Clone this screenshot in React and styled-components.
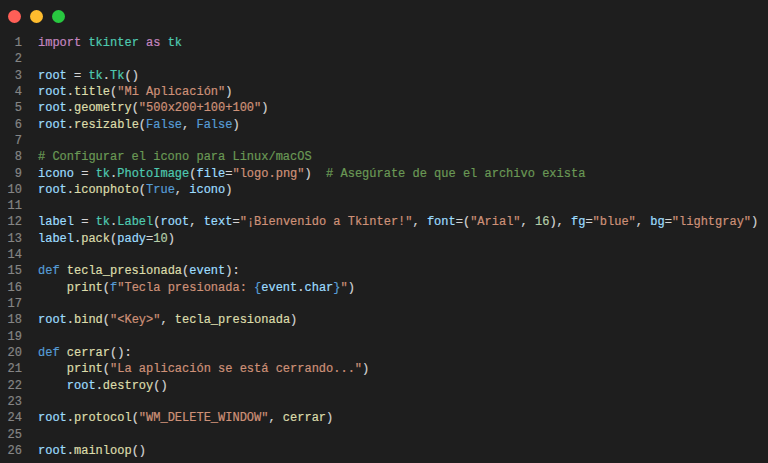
import React from 'react'
import styled, { createGlobalStyle } from 'styled-components'

const Global = createGlobalStyle`
  html, body {
    margin: 0;
    padding: 0;
    background: #1e1e1e;
  }
`

const c = {
  kw: '#c586c0',
  mod: '#4ec9b0',
  v: '#9cdcfe',
  fn: '#dcdcaa',
  s: '#ce9178',
  cm: '#6a9955',
  b: '#569cd6',
  n: '#b5cea8',
  p: '#d4d4d4',
}

// each line is a list of [colorKey, text]
const lines = [
  [['kw', 'import'], ['p', ' '], ['mod', 'tkinter'], ['p', ' '], ['kw', 'as'], ['p', ' '], ['mod', 'tk']],
  [],
  [['v', 'root'], ['p', ' = '], ['mod', 'tk'], ['p', '.'], ['mod', 'Tk'], ['p', '()']],
  [['v', 'root'], ['p', '.'], ['fn', 'title'], ['p', '('], ['s', '"Mi Aplicación"'], ['p', ')']],
  [['v', 'root'], ['p', '.'], ['fn', 'geometry'], ['p', '('], ['s', '"500x200+100+100"'], ['p', ')']],
  [['v', 'root'], ['p', '.'], ['fn', 'resizable'], ['p', '('], ['b', 'False'], ['p', ', '], ['b', 'False'], ['p', ')']],
  [],
  [['cm', '# Configurar el icono para Linux/macOS']],
  [['v', 'icono'], ['p', ' = '], ['mod', 'tk'], ['p', '.'], ['mod', 'PhotoImage'], ['p', '('], ['v', 'file'], ['p', '='], ['s', '"logo.png"'], ['p', ')  '], ['cm', '# Asegúrate de que el archivo exista']],
  [['v', 'root'], ['p', '.'], ['fn', 'iconphoto'], ['p', '('], ['b', 'True'], ['p', ', '], ['v', 'icono'], ['p', ')']],
  [],
  [['v', 'label'], ['p', ' = '], ['mod', 'tk'], ['p', '.'], ['mod', 'Label'], ['p', '('], ['v', 'root'], ['p', ', '], ['v', 'text'], ['p', '='], ['s', '"¡Bienvenido a Tkinter!"'], ['p', ', '], ['v', 'font'], ['p', '=('], ['s', '"Arial"'], ['p', ', '], ['n', '16'], ['p', '), '], ['v', 'fg'], ['p', '='], ['s', '"blue"'], ['p', ', '], ['v', 'bg'], ['p', '='], ['s', '"lightgray"'], ['p', ')']],
  [['v', 'label'], ['p', '.'], ['fn', 'pack'], ['p', '('], ['v', 'pady'], ['p', '='], ['n', '10'], ['p', ')']],
  [],
  [['b', 'def'], ['p', ' '], ['fn', 'tecla_presionada'], ['p', '('], ['v', 'event'], ['p', '):']],
  [['p', '    '], ['fn', 'print'], ['p', '('], ['b', 'f'], ['s', '"Tecla presionada: '], ['b', '{'], ['v', 'event'], ['p', '.'], ['v', 'char'], ['b', '}'], ['s', '"'], ['p', ')']],
  [],
  [['v', 'root'], ['p', '.'], ['fn', 'bind'], ['p', '('], ['s', '"<Key>"'], ['p', ', '], ['fn', 'tecla_presionada'], ['p', ')']],
  [],
  [['b', 'def'], ['p', ' '], ['fn', 'cerrar'], ['p', '():']],
  [['p', '    '], ['fn', 'print'], ['p', '('], ['s', '"La aplicación se está cerrando..."'], ['p', ')']],
  [['p', '    '], ['v', 'root'], ['p', '.'], ['fn', 'destroy'], ['p', '()']],
  [],
  [['v', 'root'], ['p', '.'], ['fn', 'protocol'], ['p', '('], ['s', '"WM_DELETE_WINDOW"'], ['p', ', '], ['fn', 'cerrar'], ['p', ')']],
  [],
  [['v', 'root'], ['p', '.'], ['fn', 'mainloop'], ['p', '()']],
]

export default function App() {
  return (
    <Window>
      <Global />
      <TitleBar>
        <Dot color="#ff5f57" />
        <Dot color="#febc2e" />
        <Dot color="#28c840" />
      </TitleBar>
      <Code>
        {lines.map((parts, i) => (
          <Row key={i}>
            <LineNo>{i + 1}</LineNo>
            <LineText>
              {parts.map(([k, t], j) => (
                <Tok key={j} $color={c[k]}>{t}</Tok>
              ))}
            </LineText>
          </Row>
        ))}
      </Code>
    </Window>
  )
}

const Window = styled.div`
  width: 768px;
  height: 463px;
  background: #1e1e1e;
  overflow: hidden;
  display: flex;
  flex-direction: column;
`

const TitleBar = styled.div`
  height: 32px;
  display: flex;
  align-items: center;
  gap: 9px;
  padding-left: 8px;
  box-sizing: border-box;
`

const Dot = styled.span`
  width: 13px;
  height: 13px;
  border-radius: 50%;
  background: ${p => p.color};
`

const Code = styled.div`
  padding-top: 3px;
  font-family: "Liberation Mono", "DejaVu Sans Mono", monospace;
  font-size: 12px;
  line-height: 16.32px;
  color: #d4d4d4;
  -webkit-text-stroke: 0.2px currentColor;
`

const Row = styled.div`
  display: grid;
  grid-template-columns: 22px 1fr;
  column-gap: 16px;
  height: 16.32px;
`

const LineNo = styled.span`
  text-align: right;
  color: #858585;
`

const LineText = styled.span`
  white-space: pre;
`

const Tok = styled.span`
  color: ${p => p.$color};
  -webkit-text-stroke: 0.2px ${p => p.$color};
`
